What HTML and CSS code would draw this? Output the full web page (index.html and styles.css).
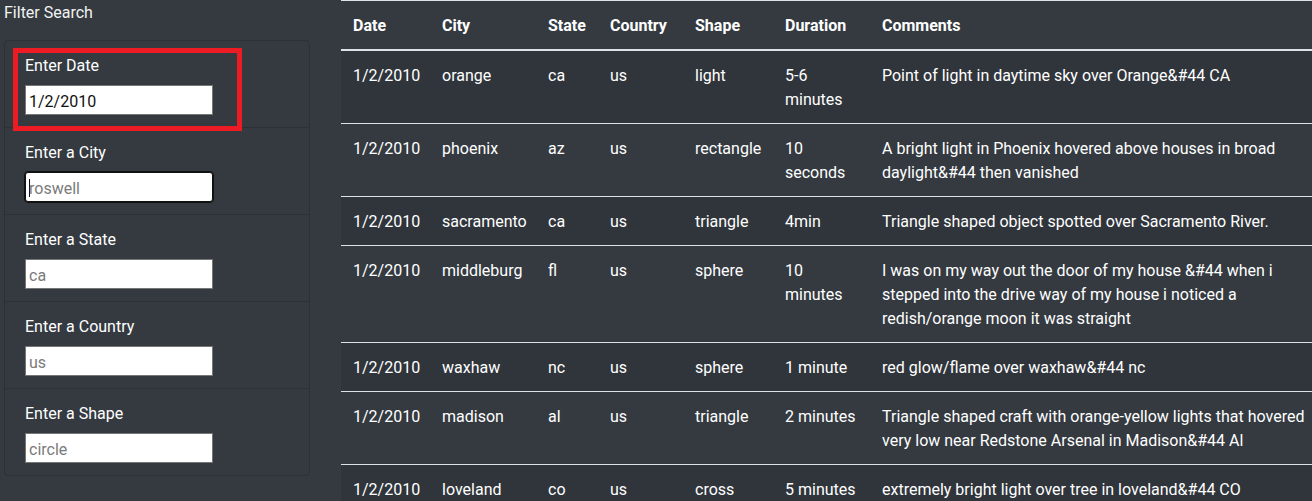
FILE: index.html
```html
<!DOCTYPE html>
<html lang="en">
<head>
<meta charset="utf-8">
<title>UFO Sightings</title>
<link rel="stylesheet" href="styles.css">
</head>
<body>
<div class="page">
  <aside class="sidebar">
    <div class="sidebar-title">Filter Search</div>
    <ul class="filter-card">
      <li class="filter-item">
        <label class="filter-label" for="datetime">Enter Date</label>
        <input class="filter-input" id="datetime" type="text" value="1/2/2010">
      </li>
      <li class="filter-item">
        <label class="filter-label" for="city">Enter a City</label>
        <input class="filter-input is-focused" id="city" type="text" placeholder="roswell">
      </li>
      <li class="filter-item">
        <label class="filter-label" for="state">Enter a State</label>
        <input class="filter-input" id="state" type="text" placeholder="ca">
      </li>
      <li class="filter-item">
        <label class="filter-label" for="country">Enter a Country</label>
        <input class="filter-input" id="country" type="text" placeholder="us">
      </li>
      <li class="filter-item">
        <label class="filter-label" for="shape">Enter a Shape</label>
        <input class="filter-input" id="shape" type="text" placeholder="circle">
      </li>
    </ul>
    <div class="highlight-box"></div>
  </aside>
  <main class="content">
    <table class="ufo-table">
      <colgroup>
        <col class="c-date"><col class="c-city"><col class="c-state"><col class="c-country"><col class="c-shape"><col class="c-duration"><col class="c-comments">
      </colgroup>
      <thead>
        <tr><th>Date</th><th>City</th><th>State</th><th>Country</th><th>Shape</th><th>Duration</th><th>Comments</th></tr>
      </thead>
      <tbody>
        <tr><td>1/2/2010</td><td>orange</td><td>ca</td><td>us</td><td>light</td><td>5-6 minutes</td><td>Point of light in daytime sky over Orange&amp;#44 CA</td></tr>
        <tr><td>1/2/2010</td><td>phoenix</td><td>az</td><td>us</td><td>rectangle</td><td>10 seconds</td><td>A bright light in Phoenix hovered above houses in broad daylight&amp;#44 then vanished</td></tr>
        <tr><td>1/2/2010</td><td>sacramento</td><td>ca</td><td>us</td><td>triangle</td><td>4min</td><td>Triangle shaped object spotted over Sacramento River.</td></tr>
        <tr><td>1/2/2010</td><td>middleburg</td><td>fl</td><td>us</td><td>sphere</td><td>10 minutes</td><td>I was on my way out the door of my house &amp;#44 when i stepped into the drive way of my house i noticed a redish/orange moon it was straight</td></tr>
        <tr><td>1/2/2010</td><td>waxhaw</td><td>nc</td><td>us</td><td>sphere</td><td>1 minute</td><td>red glow/flame over waxhaw&amp;#44 nc</td></tr>
        <tr><td>1/2/2010</td><td>madison</td><td>al</td><td>us</td><td>triangle</td><td>2 minutes</td><td>Triangle shaped craft with orange-yellow lights that hovered very low near Redstone Arsenal in Madison&amp;#44 Al</td></tr>
        <tr><td>1/2/2010</td><td>loveland</td><td>co</td><td>us</td><td>cross</td><td>5 minutes</td><td>extremely bright light over tree in loveland&amp;#44 CO</td></tr>
      </tbody>
    </table>
  </main>
</div>
</body>
</html>
```
FILE: styles.css
```css
html, body {
  margin: 0;
  padding: 0;
  overflow: hidden;
  background: #343a40;
}

body {
  font-family: Roboto, "Liberation Sans", Arial, sans-serif;
  font-size: 16px;
  line-height: 24px;
  color: #ffffff;
}

.page {
  display: flex;
  align-items: flex-start;
}

.sidebar {
  position: relative;
  flex: 0 0 auto;
  width: 337px;
  padding-left: 4px;
}

.sidebar-title {
  height: 23px;
  padding-top: 1px;
  margin-bottom: 16px;
  color: #f2f2f2;
}

.filter-card {
  list-style: none;
  margin: 0;
  padding: 0;
  width: 306px;
  box-sizing: border-box;
  border: 1px solid #2c3136;
  border-radius: 4px;
  overflow: hidden;
}

.filter-item {
  display: flex;
  flex-direction: column;
  align-items: flex-start;
  padding: 12px 20px;
  border-top: 1px solid #2c3136;
}

.filter-item:first-child {
  border-top: none;
}

.filter-label {
  display: block;
  padding-top: 1px;
  margin-bottom: 7px;
  line-height: 24px;
  color: #ffffff;
}

.filter-input {
  width: 188px;
  height: 30px;
  box-sizing: border-box;
  margin: 0;
  padding: 2px 3px 0;
  border: 1px solid #767676;
  border-radius: 0;
  background: #ffffff;
  font-family: inherit;
  font-size: 16px;
  color: #111111;
  outline: none;
}

.filter-input::placeholder {
  color: #7b7b7b;
  opacity: 1;
}

.filter-input.is-focused {
  border-color: #111111;
  border-radius: 3px;
  outline: 1px solid #111111;
  outline-offset: 0;
  background-image: linear-gradient(#111111, #111111);
  background-size: 1px 18px;
  background-position: 3px 6px;
  background-repeat: no-repeat;
}

.highlight-box {
  position: absolute;
  left: 13px;
  top: 48px;
  width: 229px;
  height: 83px;
  box-sizing: border-box;
  border: 5px solid #ed1c24;
  pointer-events: none;
}

.content {
  flex: 0 0 auto;
}

.ufo-table {
  border-collapse: collapse;
  table-layout: fixed;
  width: 971px;
  color: #ffffff;
}

.c-date { width: 89px; }
.c-city { width: 106px; }
.c-state { width: 62px; }
.c-country { width: 85px; }
.c-shape { width: 90px; }
.c-duration { width: 97px; }
.c-comments { width: 442px; }

.ufo-table th,
.ufo-table td {
  padding: 13px 12px 11px;
  text-align: left;
  vertical-align: top;
  border-top: 1px solid #dee2e6;
}

.ufo-table th:last-child,
.ufo-table td:last-child {
  padding-right: 4px;
}

.ufo-table th {
  font-weight: 700;
  border-bottom: 2px solid #dee2e6;
}

.ufo-table tbody tr:nth-child(odd) {
  background: rgba(0, 0, 0, 0.07);
}

.ufo-table tbody tr:first-child td {
  border-top: none;
}
```
